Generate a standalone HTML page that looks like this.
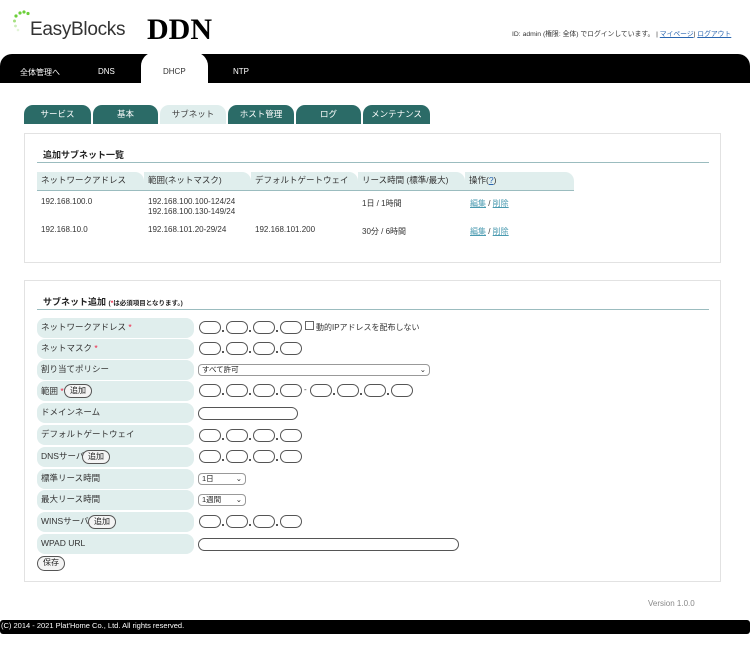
<!DOCTYPE html>
<html><head><meta charset="utf-8">
<style>
*{box-sizing:border-box;margin:0;padding:0}
body{width:750px;height:662px;background:#fff;font-family:"Liberation Sans","Noto Sans CJK JP",sans-serif;color:#333;position:relative;overflow:hidden;font-size:8px}
.a{position:absolute;white-space:nowrap}
a{color:#2a66b0}
.nav{left:0;top:54px;width:750px;height:29px;background:#000;border-radius:12px 12px 0 0}
.nt{color:#fff;font-size:8px;top:67px}
.dh{left:141px;top:52px;width:67px;height:32px;background:#fff;border-radius:14px 14px 0 0}
.st{top:105px;height:19px;background:#2b6b67;color:#fff;border-radius:9px 9px 0 0;text-align:center;font-size:8.5px;line-height:18px}
.st.on{background:#e0eeed;color:#444}
.box{left:24px;width:697px;border:1px solid #e2e2e2;background:#fff}
.h{font-weight:bold;font-size:9px;color:#222}
.line{height:1px;background:#9bbcbf}
.th{top:172px;height:18px;background:#e0eeed;border-radius:0 9px 0 0;font-size:8.5px;line-height:17px;padding-left:4px;color:#333}
.td{font-size:8px;color:#333}
.lb{left:37px;width:157px;height:20px;background:#e0eeed;border-radius:8px;font-size:8.5px;line-height:19px;padding-left:4px;color:#333}
.g{display:flex;gap:5px}
.o{width:22px;height:13px;border:1.5px solid #555;border-radius:7px;background:#fff;position:relative}
.o+.o::before{content:"";position:absolute;left:-5px;top:8px;width:2px;height:2px;background:#555}
.d{font-size:8px;color:#333}
.btn{height:14px;border:1.5px solid #555;border-radius:8px;background:#f4f4f4;font-size:8px;line-height:11px;padding:0 5px;color:#222}
.sel{height:12px;border:1px solid #999;border-radius:4px;font-size:7.5px;line-height:10px;padding-left:3px;background:#fff;color:#222}
.r{color:#e24}
</style></head><body>
<div class="a" style="left:12px;top:10px;width:22px;height:22px">
<svg width="22" height="24" viewBox="0 0 22 24"><g fill="#6ccf3a"><circle cx="4" cy="6" r="1.6"/><circle cx="8" cy="3" r="1.6"/><circle cx="12" cy="2" r="1.6"/><circle cx="16" cy="3.5" r="1.6"/><circle cx="2.5" cy="11" r="1.5" fill="#a5df80"/><circle cx="3.5" cy="16" r="1.4" fill="#cdeebb"/><circle cx="6" cy="20" r="1.3" fill="#e3f5d8"/></g></svg></div>
<div class="a" style="left:30px;top:19px;font-size:19px;color:#333;font-family:'Liberation Sans',sans-serif;letter-spacing:-0.3px">EasyBlocks</div>
<div class="a" style="left:147px;top:13px;font-size:30px;font-weight:bold;font-family:'Liberation Serif',serif;color:#000">DDN</div>
<div class="a" style="left:512px;top:28px;font-size:6.8px;color:#333">ID: admin (権限: 全体) でログインしています。 | <a href="#">マイページ</a>| <a href="#">ログアウト</a></div>
<div class="a nav"></div>
<div class="a dh"></div>
<div class="a nt" style="left:20px">全体管理へ</div>
<div class="a nt" style="left:98px">DNS</div>
<div class="a nt" style="left:163px;color:#333">DHCP</div>
<div class="a nt" style="left:233px">NTP</div>
<div class="a st" style="left:24px;width:67px">サービス</div>
<div class="a st" style="left:93px;width:65px">基本</div>
<div class="a st on" style="left:160px;width:66px">サブネット</div>
<div class="a st" style="left:228px;width:66px">ホスト管理</div>
<div class="a st" style="left:296px;width:65px">ログ</div>
<div class="a st" style="left:363px;width:67px">メンテナンス</div>

<div class="a box" style="top:133px;height:130px"></div>
<div class="a h" style="left:43px;top:148px">追加サブネット一覧</div>
<div class="a line" style="left:37px;top:162px;width:672px"></div>
<div class="a th" style="left:37px;width:107px">ネットワークアドレス</div>
<div class="a th" style="left:144px;width:107px">範囲(ネットマスク)</div>
<div class="a th" style="left:251px;width:107px">デフォルトゲートウェイ</div>
<div class="a th" style="left:358px;width:107px">リース時間 (標準/最大)</div>
<div class="a th" style="left:465px;width:109px">操作(<a href="#">?</a>)</div>
<div class="a line" style="left:37px;top:190px;width:537px"></div>
<div class="a td" style="left:41px;top:197px">192.168.100.0</div>
<div class="a td" style="left:148px;top:197px;line-height:10px">192.168.100.100-124/24<br>192.168.100.130-149/24</div>
<div class="a td" style="left:362px;top:198px">1日 / 1時間</div>
<div class="a td" style="left:470px;top:198px"><a href="#" style="color:#4a9ab0">編集</a> / <a href="#" style="color:#4a9ab0">削除</a></div>
<div class="a td" style="left:41px;top:225px">192.168.10.0</div>
<div class="a td" style="left:148px;top:225px">192.168.101.20-29/24</div>
<div class="a td" style="left:255px;top:225px">192.168.101.200</div>
<div class="a td" style="left:362px;top:226px">30分 / 6時間</div>
<div class="a td" style="left:470px;top:226px"><a href="#" style="color:#4a9ab0">編集</a> / <a href="#" style="color:#4a9ab0">削除</a></div>

<div class="a box" style="top:280px;height:302px"></div>
<div class="a h" style="left:43px;top:295px">サブネット追加 <span style="font-size:6.5px">(<span class="r">*</span>は必須項目となります。)</span></div>
<div class="a line" style="left:37px;top:309px;width:672px"></div>

<div class="a lb" style="top:318px">ネットワークアドレス <span class="r">*</span></div>
<div class="a lb" style="top:339px">ネットマスク <span class="r">*</span></div>
<div class="a lb" style="top:360px">割り当てポリシー</div>
<div class="a lb" style="top:381px;line-height:20px">範囲 <span class="r">*</span></div>
<div class="a btn" style="left:64px;top:384px">追加</div>
<div class="a lb" style="top:403px">ドメインネーム</div>
<div class="a lb" style="top:425px">デフォルトゲートウェイ</div>
<div class="a lb" style="top:447px">DNSサーバ</div>
<div class="a btn" style="left:82px;top:450px">追加</div>
<div class="a lb" style="top:469px">標準リース時間</div>
<div class="a lb" style="top:490px">最大リース時間</div>
<div class="a lb" style="top:512px">WINSサーバ</div>
<div class="a btn" style="left:88px;top:515px">追加</div>
<div class="a lb" style="top:534px">WPAD URL</div>

<div class="a g" style="left:199px;top:321px"><div class="o"></div><div class="o"></div><div class="o"></div><div class="o"></div></div>
<div class="a" style="left:305px;top:321px;width:9px;height:9px;border:1px solid #666;background:#fff"></div>
<div class="a d" style="left:316px;top:322px">動的IPアドレスを配布しない</div>
<div class="a g" style="left:199px;top:342px"><div class="o"></div><div class="o"></div><div class="o"></div><div class="o"></div></div>
<div class="a sel" style="left:198px;top:364px;width:232px">すべて許可<span style="float:right;margin-right:3px">⌄</span></div>
<div class="a g" style="left:199px;top:384px"><div class="o"></div><div class="o"></div><div class="o"></div><div class="o"></div></div>
<div class="a d" style="left:304px;top:385px">-</div>
<div class="a g" style="left:310px;top:384px"><div class="o"></div><div class="o"></div><div class="o"></div><div class="o"></div></div>
<div class="a" style="left:198px;top:407px;width:100px;height:13px;border:1.5px solid #555;border-radius:7px"></div>
<div class="a g" style="left:199px;top:429px"><div class="o"></div><div class="o"></div><div class="o"></div><div class="o"></div></div>
<div class="a g" style="left:199px;top:450px"><div class="o"></div><div class="o"></div><div class="o"></div><div class="o"></div></div>
<div class="a sel" style="left:198px;top:473px;width:48px">1日<span style="float:right;margin-right:3px">⌄</span></div>
<div class="a sel" style="left:198px;top:494px;width:48px">1週間<span style="float:right;margin-right:3px">⌄</span></div>
<div class="a g" style="left:199px;top:515px"><div class="o"></div><div class="o"></div><div class="o"></div><div class="o"></div></div>
<div class="a" style="left:198px;top:538px;width:261px;height:13px;border:1.5px solid #555;border-radius:7px"></div>
<div class="a btn" style="left:37px;top:556px;height:15px;line-height:12px">保存</div>

<div class="a" style="left:648px;top:599px;font-size:8px;color:#888">Version 1.0.0</div>
<div class="a" style="left:0;top:620px;width:750px;height:14px;background:#000;border-radius:3px;color:#fff;font-size:7.5px;line-height:12px;padding-left:1px">(C) 2014 - 2021 Plat'Home Co., Ltd. All rights reserved.</div>
</body></html>
